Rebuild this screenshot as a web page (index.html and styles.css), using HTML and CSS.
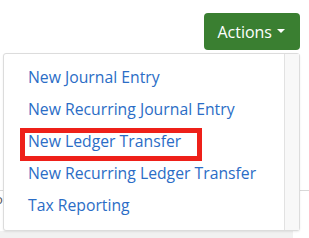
FILE: index.html
```html
<!DOCTYPE html>
<html lang="en">
<head>
  <meta charset="UTF-8">
  <meta name="viewport" content="width=device-width, initial-scale=1.0">
  <title>Ledger Actions</title>
  <link rel="stylesheet" href="styles.css">
</head>
<body>

  <div class="page">
    <!-- Toolbar with the actions button -->
    <div class="toolbar">
      <button class="actions-btn">Actions <span class="caret"></span></button>
    </div>

    <!-- Content under the open menu -->
    <div class="content"></div>
    <div class="content-row">o</div>
    <div class="footer-strip"></div>

    <!-- Open dropdown menu -->
    <div class="dropdown">
      <ul class="dropdown-list">
        <li class="dropdown-item"><a href="#">New Journal Entry</a></li>
        <li class="dropdown-item"><a href="#">New Recurring Journal Entry</a></li>
        <li class="dropdown-item highlight"><a href="#">New Ledger Transfer</a></li>
        <li class="dropdown-item"><a href="#">New Recurring Ledger Transfer</a></li>
        <li class="dropdown-item"><a href="#">Tax Reporting</a></li>
      </ul>
      <div class="dropdown-scroll"></div>
    </div>
  </div>

</body>
</html>
```

FILE: styles.css
```css
body {
  margin: 0;
  background-color: #fff;
  font-family: "Open Sans", Arial, sans-serif;
  color: #333;
}

.page {
  position: relative;
  width: 309px;
  height: 238px;
  overflow: hidden;
}

.toolbar {
  display: flex;
  justify-content: flex-end;
  padding: 13px 9px 0 0;
}

.actions-btn {
  display: flex;
  align-items: center;
  gap: 5px;
  height: 37px;
  padding: 0 15px 0 13px;
  font-family: "Open Sans", Arial, sans-serif;
  font-size: 16px;
  color: #fff;
  background-color: #3a7f31;
  border: none;
  border-radius: 4px;
}

.caret {
  width: 0;
  height: 0;
  border-left: 4px solid transparent;
  border-right: 4px solid transparent;
  border-top: 4px solid #fff;
  margin-top: -2px;
}

.content {
  height: 140px;
  border-bottom: 1px solid #d8d8d8;
}

.content-row {
  height: 40px;
  padding-top: 2px;
  box-sizing: border-box;
  font-size: 13px;
  line-height: 1;
  color: #555;
  margin-left: -5px;
}

.footer-strip {
  width: 293px;
  height: 8px;
  background-color: #f1f1f1;
}

/* Menu lies over the content */
.dropdown {
  position: absolute;
  top: 53px;
  left: 3px;
  width: 295px;
  height: 176px;
  display: flex;
  background-color: #fff;
  border: 1px solid #dcdcdc;
  border-radius: 3px;
  box-shadow: 0 1px 2px rgba(0, 0, 0, 0.08);
}

.dropdown-list {
  list-style-type: none;
  margin: 0;
  padding: 7px 0 0 0;
  flex: 1;
}

.dropdown-item {
  position: relative;
  height: 32px;
  display: flex;
  align-items: center;
  padding-left: 24px;
  font-size: 15.75px;
}

.dropdown-item a {
  text-decoration: none;
  color: #2b6dc6;
}

.highlight::after {
  content: "";
  position: absolute;
  left: 16px;
  top: 3px;
  width: 172px;
  height: 23px;
  border: 5px solid #ee2019;
}

.dropdown-scroll {
  width: 14px;
  background-color: #f8f8f8;
  border-left: 1px solid #e2e2e2;
}
```
